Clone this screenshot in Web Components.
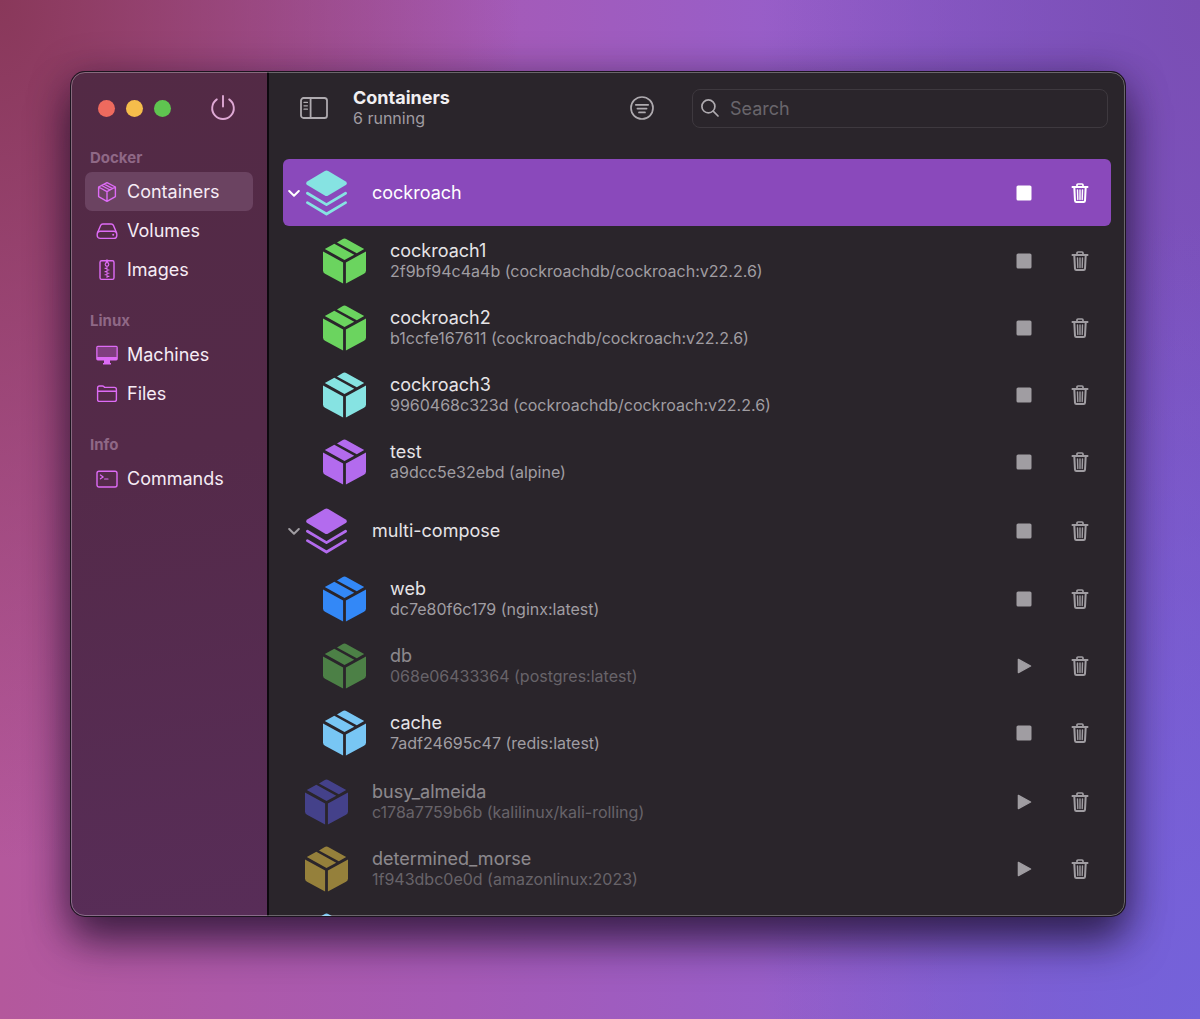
<!DOCTYPE html>
<html lang="en">
<head>
<meta charset="utf-8">
<title>Containers</title>
<style>
  html { height: 100%; }
  body {
    margin: 0;
    height: 100vh;
    box-sizing: border-box;
    padding: 72px 75px 103px 71px;
    display: flex;
    font-family: Inter, "Liberation Sans", sans-serif;
    color: #e6e4e7;
    background:
      radial-gradient(ellipse 520px 860px at 0% 0%, #89385a 0%, rgba(137, 56, 90, 0) 100%),
      radial-gradient(ellipse 440px 800px at 100% 100%, #7462da 0%, rgba(116, 98, 218, 0) 100%),
      radial-gradient(ellipse 440px 900px at 100% 0%, #7a4eb4 0%, rgba(122, 78, 180, 0) 100%),
      linear-gradient(90deg, #b4589c 0%, #a65ab6 38%, #985ec8 64%, #8058cc 100%);
  }
</style>
</head>
<body>

<app-window>
  <side-bar slot="side">
    <side-section label="Docker">
      <side-item icon="box" selected>Containers</side-item>
      <side-item icon="drive">Volumes</side-item>
      <side-item icon="zip">Images</side-item>
    </side-section>
    <side-section label="Linux">
      <side-item icon="display">Machines</side-item>
      <side-item icon="folder">Files</side-item>
    </side-section>
    <side-section label="Info">
      <side-item icon="terminal">Commands</side-item>
    </side-section>
  </side-bar>

  <tool-bar>
    <span slot="title">Containers</span>
    <span slot="status">6 running</span>
  </tool-bar>

  <container-list>
    <container-group>
      <container-row slot="head" kind="stack" color="#86e3e2" name="cockroach" selected></container-row>
      <container-row color="#6bd45f" name="cockroach1" info="2f9bf94c4a4b (cockroachdb/cockroach:v22.2.6)"></container-row>
      <container-row color="#6bd45f" name="cockroach2" info="b1ccfe167611 (cockroachdb/cockroach:v22.2.6)"></container-row>
      <container-row color="#86e3e2" name="cockroach3" info="9960468c323d (cockroachdb/cockroach:v22.2.6)"></container-row>
      <container-row color="#b36bee" name="test" info="a9dcc5e32ebd (alpine)"></container-row>
    </container-group>
    <container-group>
      <container-row slot="head" kind="stack" color="#b36bee" name="multi-compose"></container-row>
      <container-row color="#3388f7" name="web" info="dc7e80f6c179 (nginx:latest)"></container-row>
      <container-row color="#6bd45f" name="db" info="068e06433364 (postgres:latest)" stopped></container-row>
      <container-row color="#78c6f4" name="cache" info="7adf24695c47 (redis:latest)"></container-row>
    </container-group>
    <container-row color="#5d5ce2" name="busy_almeida" info="c178a7759b6b (kalilinux/kali-rolling)" stopped></container-row>
    <container-row color="#f7d44a" name="determined_morse" info="1f943dbc0e0d (amazonlinux:2023)" stopped></container-row>
    <container-row color="#78c6f4"></container-row>
  </container-list>
</app-window>

<script>
  const icons = {
    box: `<svg width="22" height="22" viewBox="0 0 22 22" fill="none" stroke="currentColor" stroke-width="1.4" stroke-linejoin="round" stroke-linecap="round">
      <path d="M11 1.6 L19.4 6 V15.6 L11 20.4 L2.6 15.6 V6 Z M2.6 6 L11 10.6 L19.4 6 M11 10.6 V20.4 M5.6 4.5 L14 9 M8.2 3.2 L16.6 7.6"/></svg>`,
    drive: `<svg width="22" height="22" viewBox="0 0 22 22" fill="none" stroke="currentColor" stroke-width="1.4" stroke-linejoin="round">
      <path d="M1.6 12.6 L4.6 5.4 Q5.2 4 6.8 4 H15.2 Q16.8 4 17.4 5.4 L20.4 12.6"/>
      <rect x="1.2" y="11.2" width="19.6" height="7.2" rx="3"/>
      <circle cx="17.2" cy="14.8" r="1" fill="currentColor" stroke="none"/></svg>`,
    zip: `<svg width="22" height="22" viewBox="0 0 22 22" fill="none" stroke="currentColor" stroke-width="1.4" stroke-linejoin="round">
      <rect x="4" y="1.8" width="14" height="18.6" rx="1.6"/>
      <path d="M11 .6 V3.4" stroke-width="2.2"/>
      <circle cx="11" cy="5.4" r="1.8" stroke-width="1.2"/>
      <path d="M11 7 V19" stroke-width="1"/>
      <path d="M8.6 9.4 H11 M11 11 H13.4 M8.6 12.6 H11 M11 14.2 H13.4 M8.6 15.8 H11 M11 17.4 H13.4" stroke-width="1.1"/></svg>`,
    display: `<svg width="22" height="22" viewBox="0 0 22 22">
      <rect x="1" y="2.4" width="20" height="13" rx="1.4" fill="currentColor" fill-opacity=".32"/>
      <path fill="currentColor" fill-rule="evenodd" d="M1.8 1.8 H20.2 Q21.8 1.8 21.8 3.4 V14.8 Q21.8 16.6 20.2 16.6 H14 V19 H15 V20.4 H7 V19 H8 V16.6 H1.8 Q.2 16.6 .2 14.8 V3.4 Q.2 1.8 1.8 1.8 Z M1.5 3.1 V13 H20.5 V3.1 Z"/></svg>`,
    folder: `<svg width="22" height="22" viewBox="0 0 22 22" fill="none" stroke="currentColor" stroke-width="1.4" stroke-linejoin="round">
      <path d="M1.6 5 Q1.6 3 3.6 3 H6.4 Q7.2 3 7.8 3.6 L8.6 4.4 H18.4 Q20.4 4.4 20.4 6.4 V16.4 Q20.4 18.4 18.4 18.4 H3.6 Q1.6 18.4 1.6 16.4 Z M1.6 8.2 H20.4"/></svg>`,
    terminal: `<svg width="22" height="22" viewBox="0 0 22 22" fill="none" stroke="currentColor" stroke-width="1.4" stroke-linejoin="round" stroke-linecap="round">
      <rect x="1" y="3.2" width="20" height="15.8" rx="2"/>
      <path d="M4.4 7 L7.2 8.9 L4.4 10.8 M8.6 11 H12" stroke-width="1.2"/></svg>`,
    power: `<svg width="26" height="26" viewBox="0 0 26 26" fill="none" stroke="currentColor" stroke-width="1.9" stroke-linecap="round">
      <path d="M13 1 V11.6 M6.8 4.4 A10.8 10.8 0 1 0 19.2 4.4"/></svg>`,
    sidebar: `<svg width="28" height="22" viewBox="0 0 28 22" fill="none" stroke="currentColor" stroke-width="1.8">
      <rect x="1" y="1" width="26" height="20" rx="2.6"/><path d="M10.6 1 V21"/>
      <path d="M4 5.4 H7.4 M4 8.8 H7.4 M4 12.2 H7.4" stroke-width="1.3" stroke-linecap="round"/></svg>`,
    filter: `<svg width="24" height="24" viewBox="0 0 24 24" fill="none" stroke="currentColor" stroke-width="1.7" stroke-linecap="round">
      <circle cx="12" cy="12" r="11"/><path d="M5.8 8.8 H18.2 M7.4 12.6 H16.6 M9 16.4 H15"/></svg>`,
    search: `<svg width="18" height="18" viewBox="0 0 18 18" fill="none" stroke="currentColor" stroke-width="1.7" stroke-linecap="round">
      <circle cx="7.4" cy="7.4" r="6.5"/><path d="M12.2 12.2 L17 17"/></svg>`,
    chevron: `<svg width="12" height="12" viewBox="0 0 12 12" fill="none" stroke="currentColor" stroke-width="2" stroke-linecap="round" stroke-linejoin="round">
      <path d="M1.2 4 L6 8.8 L10.8 4"/></svg>`,
    stop: `<svg width="16" height="16" viewBox="0 0 16 16"><rect x=".5" y=".5" width="15" height="15" rx="1.6" fill="currentColor"/></svg>`,
    play: `<svg width="16" height="16" viewBox="0 0 16 16"><path d="M2.4 1.4 V14.6 L14.6 8 Z" fill="currentColor" stroke="currentColor" stroke-width="1.4" stroke-linejoin="round"/></svg>`,
    trash: `<svg width="18" height="20" viewBox="0 0 18 20" fill="none" stroke="currentColor" stroke-linecap="round" stroke-linejoin="round">
      <path d="M1.4 4 H16.6" stroke-width="1.8"/><path d="M6 3.6 V2 Q6 1 7 1 H11 Q12 1 12 2 V3.6" stroke-width="1.7"/>
      <path d="M3.3 4.4 L4 17.6 Q4.1 19 5.4 19 H12.6 Q13.9 19 14 17.6 L14.7 4.4" stroke-width="2"/>
      <path d="M6.5 7 L6.8 16.6 M9 7 V16.6 M11.5 7 L11.2 16.6" stroke-width="1.4"/></svg>`,
    stack: `<svg width="43" height="46" viewBox="0 0 43 46" fill="currentColor">
      <path d="M23.2 .9 L40.8 11.4 Q43 13.2 40.8 15 L23.2 25.6 Q21.5 26.6 19.8 25.6 L2.2 15 Q0 13.2 2.2 11.4 L19.8 .9 Q21.5 0 23.2 .9 Z"/>
      <path d="M2.4 23.2 L21.5 34.6 L40.6 23.2 M2.4 32.6 L21.5 44 L40.6 32.6" fill="none" stroke="currentColor" stroke-width="2.8" stroke-linecap="round" stroke-linejoin="round"/></svg>`,
    cube: `<svg width="43" height="46" viewBox="0 0 43 46" fill="currentColor">
      <path d="M0 13.4 L20.1 24.4 V45.6 L2 35.8 Q0 34.6 0 32.4 Z M43 13.4 L22.9 24.4 V45.6 L41 35.8 Q43 34.6 43 32.4 Z"/>
      <path d="M1.8 11 L11.3 5.8 L31.2 16.8 L21.5 22 Z M14 4.4 L19.4 1.2 Q21.5 0 23.6 1.2 L41.2 11 L33.8 15.2 Z"/></svg>`
  };

  class AppWindow extends HTMLElement {
    connectedCallback() {
      const sd = this.attachShadow({ mode: 'open' });
      sd.innerHTML = `<style>
        :host {
          flex: 1;
          min-width: 0;
          display: grid;
          grid-template-columns: 196px minmax(0, 1fr);
          grid-template-rows: minmax(0, 1fr);
          border-radius: 14px;
          overflow: hidden;
          position: relative;
          background: #2a252b;
          box-shadow: 0 0 0 1px #1c141f, 0 26px 42px rgba(20, 8, 30, .62), 0 4px 40px rgba(20, 8, 30, .36);
        }
        /* light hairline drawn over both panes */
        :host::after {
          content: "";
          position: absolute;
          inset: 0;
          border: 1px solid rgba(255, 255, 255, .3);
          border-radius: inherit;
          pointer-events: none;
        }
        main {
          min-width: 0;
          min-height: 0;
          display: flex;
          flex-direction: column;
          border-left: 2px solid #0d090e;
        }
      </style>
      <slot name="side"></slot>
      <main><slot></slot></main>`;
    }
  }

  class SideBar extends HTMLElement {
    connectedCallback() {
      const sd = this.attachShadow({ mode: 'open' });
      sd.innerHTML = `<style>
        :host {
          display: block;
          box-sizing: border-box;
          padding: 16px 14px;
          background: linear-gradient(170deg, #532a45 0%, #542a49 45%, #582d58 100%);
        }
        .top { display: flex; align-items: center; height: 40px; padding: 0 17px 0 13px; margin-bottom: 16px; }
        .lights { display: flex; gap: 11px; flex: 1; }
        i { width: 17px; height: 17px; border-radius: 50%; }
        .red { background: #ee6a5e; }
        .yellow { background: #f5bd4b; }
        .green { background: #5fc550; }
        button { display: flex; padding: 0; border: 0; background: none; color: #dfa9d5; }
        nav { display: flex; flex-direction: column; gap: 18px; }
      </style>
      <div class="top">
        <div class="lights"><i class="red"></i><i class="yellow"></i><i class="green"></i></div>
        <button type="button" aria-label="Power">${icons.power}</button>
      </div>
      <nav><slot></slot></nav>`;
    }
  }

  class SideSection extends HTMLElement {
    connectedCallback() {
      const sd = this.attachShadow({ mode: 'open' });
      sd.innerHTML = `<style>
        :host { display: block; }
        h2 { margin: 0; padding-left: 5px; font-size: 15px; line-height: 28px; font-weight: 700; color: #8f6886; }
      </style>
      <h2>${this.getAttribute('label')}</h2>
      <slot></slot>`;
    }
  }

  class SideItem extends HTMLElement {
    connectedCallback() {
      const sd = this.attachShadow({ mode: 'open' });
      sd.innerHTML = `<style>
        :host { display: block; }
        a {
          display: flex;
          align-items: center;
          gap: 9px;
          height: 39px;
          padding-left: 11px;
          border-radius: 7px;
          color: #f6ecf5;
          font-size: 18px;
          text-decoration: none;
        }
        svg { display: block; color: #dd6bf5; }
        :host([selected]) a { background: #6b4361; }
      </style>
      <a href="#">${icons[this.getAttribute('icon')]}<slot></slot></a>`;
    }
  }

  class ToolBar extends HTMLElement {
    connectedCallback() {
      const sd = this.attachShadow({ mode: 'open' });
      sd.innerHTML = `<style>
        :host { display: flex; align-items: center; padding: 16px 17px 31px 31px; }
        button { display: flex; padding: 0; border: 0; background: none; color: #aeaaaf; }
        header { flex: 1; padding-left: 25px; }
        h1 { margin: 0; font-size: 18px; line-height: 20px; font-weight: 700; color: #f1eff2; }
        p { margin: 0; font-size: 16px; line-height: 20px; color: #a09ca2; }
        label {
          display: flex;
          align-items: center;
          box-sizing: border-box;
          width: min(416px, 60%);
          height: 39px;
          margin-left: 38px;
          padding: 0 8px;
          gap: 11px;
          border: 1px solid #3e393f;
          border-radius: 8px;
          color: #aeaaaf;
        }
        input { flex: 1; min-width: 0; padding: 0; border: 0; outline: 0; background: none; font: inherit; font-size: 18px; color: #e6e4e7; }
        input::placeholder { color: #69656b; opacity: 1; }
      </style>
      <button type="button" aria-label="Toggle sidebar">${icons.sidebar}</button>
      <header>
        <h1><slot name="title"></slot></h1>
        <p><slot name="status"></slot></p>
      </header>
      <button type="button" aria-label="Filter">${icons.filter}</button>
      <label>${icons.search}<input type="text" placeholder="Search" aria-label="Search"></label>`;
    }
  }

  class ContainerList extends HTMLElement {
    connectedCallback() {
      const sd = this.attachShadow({ mode: 'open' });
      sd.innerHTML = `<style>
        :host { display: block; flex: 1; min-height: 0; overflow: hidden; padding: 0 14px; }
      </style>
      <slot></slot>`;
    }
  }

  // a compose project, its containers are indented one step
  class ContainerGroup extends HTMLElement {
    connectedCallback() {
      const sd = this.attachShadow({ mode: 'open' });
      sd.innerHTML = `<style>
        :host { display: block; padding-bottom: 2px; }
        .children { padding: 1px 0 0 18px; }
      </style>
      <slot name="head"></slot>
      <div class="children"><slot></slot></div>`;
    }
  }

  class ContainerRow extends HTMLElement {
    connectedCallback() {
      const sd = this.attachShadow({ mode: 'open' });
      const stack = this.getAttribute('kind') === 'stack';
      const stopped = this.hasAttribute('stopped');
      const info = this.getAttribute('info');
      sd.innerHTML = `<style>
        :host {
          display: flex;
          align-items: center;
          box-sizing: border-box;
          height: 67px;
          padding: 0 15px 0 5px;
          border-radius: 6px;
          color: #a09da2;
        }
        svg { display: block; }
        button { display: flex; justify-content: center; padding: 0; border: 0; background: none; color: inherit; }
        .toggle { width: 12px; margin-right: 5px; }
        .icon { color: ${this.getAttribute('color')}; }
        .text { flex: 1; min-width: 0; padding-left: 24px; }
        .name { font-size: 18px; line-height: 21px; color: #e6e4e7; }
        .info { font-size: 16px; line-height: 21px; color: #a09da2; }
        .actions { display: flex; align-items: center; gap: 24px; }
        .actions button { width: 32px; }
        :host([stopped]) .icon, :host([stopped]) .text { opacity: .52; }
        :host([selected]) { background: #8a49bb; color: #fff; }
        :host([selected]) .name { color: #fff; }
      </style>
      <div class="toggle">${stack ? `<button type="button" aria-label="Collapse">${icons.chevron}</button>` : ''}</div>
      <div class="icon">${stack ? icons.stack : icons.cube}</div>
      <div class="text">
        <div class="name">${this.getAttribute('name') || ''}</div>
        ${info ? `<div class="info">${info}</div>` : ''}
      </div>
      <div class="actions">
        <button type="button" aria-label="${stopped ? 'Start' : 'Stop'}">${stopped ? icons.play : icons.stop}</button>
        <button type="button" aria-label="Delete">${icons.trash}</button>
      </div>`;
    }
  }

  customElements.define('app-window', AppWindow);
  customElements.define('side-bar', SideBar);
  customElements.define('side-section', SideSection);
  customElements.define('side-item', SideItem);
  customElements.define('tool-bar', ToolBar);
  customElements.define('container-list', ContainerList);
  customElements.define('container-group', ContainerGroup);
  customElements.define('container-row', ContainerRow);
</script>
</body>
</html>
